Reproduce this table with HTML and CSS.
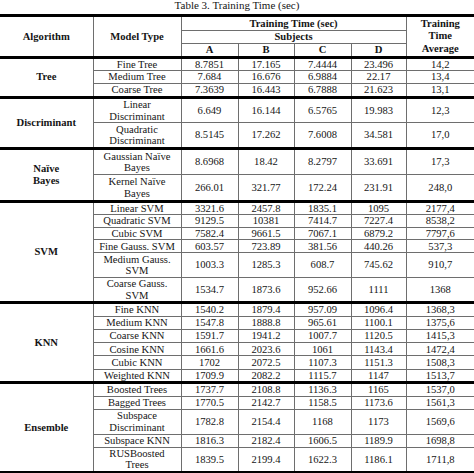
FILE: index.html
```html
<!DOCTYPE html>
<html lang="en">
<head>
<meta charset="utf-8">
<title>Table 3. Training Time (sec)</title>
<link rel="stylesheet" href="styles.css">
</head>
<body>
<div class="title">Table 3. Training Time (sec)</div>
<table class="data">
  <colgroup>
    <col class="c-alg"><col class="c-model"><col class="c-a"><col class="c-b"><col class="c-c"><col class="c-d"><col class="c-avg">
  </colgroup>
  <thead>
    <tr class="h1">
      <th rowspan="3">Algorithm</th>
      <th rowspan="3">Model Type</th>
      <th colspan="4">Training Time (sec)</th>
      <th rowspan="3" class="avg">Training<br>Time<br>Average</th>
    </tr>
    <tr class="h2"><th colspan="4">Subjects</th></tr>
    <tr class="h3"><th>A</th><th>B</th><th>C</th><th>D</th></tr>
  </thead>
  <tbody class="g-tree">
    <tr class="s"><th rowspan="3" class="alg">Tree</th><td>Fine Tree</td><td>8.7851</td><td>17.165</td><td>7.4444</td><td>23.496</td><td>14,2</td></tr>
    <tr class="s"><td>Medium Tree</td><td>7.684</td><td>16.676</td><td>6.9884</td><td>22.17</td><td>13,4</td></tr>
    <tr class="s"><td>Coarse Tree</td><td>7.3639</td><td>16.443</td><td>6.7888</td><td>21.623</td><td>13,1</td></tr>
  </tbody>
  <tbody class="g-disc">
    <tr class="d"><th rowspan="2" class="alg">Discriminant</th><td>Linear<br>Discriminant</td><td>6.649</td><td>16.144</td><td>6.5765</td><td>19.983</td><td>12,3</td></tr>
    <tr class="d"><td>Quadratic<br>Discriminant</td><td>8.5145</td><td>17.262</td><td>7.6008</td><td>34.581</td><td>17,0</td></tr>
  </tbody>
  <tbody class="g-nb">
    <tr class="d"><th rowspan="2" class="alg">Naïve<br>Bayes</th><td>Gaussian Naïve<br>Bayes</td><td>8.6968</td><td>18.42</td><td>8.2797</td><td>33.691</td><td>17,3</td></tr>
    <tr class="d"><td>Kernel Naïve<br>Bayes</td><td>266.01</td><td>321.77</td><td>172.24</td><td>231.91</td><td>248,0</td></tr>
  </tbody>
  <tbody class="g-svm">
    <tr class="s"><th rowspan="6" class="alg">SVM</th><td>Linear SVM</td><td>3321.6</td><td>2457.8</td><td>1835.1</td><td>1095</td><td>2177,4</td></tr>
    <tr class="s"><td>Quadratic SVM</td><td>9129.5</td><td>10381</td><td>7414.7</td><td>7227.4</td><td>8538,2</td></tr>
    <tr class="s"><td>Cubic SVM</td><td>7582.4</td><td>9661.5</td><td>7067.1</td><td>6879.2</td><td>7797,6</td></tr>
    <tr class="s"><td>Fine Gauss. SVM</td><td>603.57</td><td>723.89</td><td>381.56</td><td>440.26</td><td>537,3</td></tr>
    <tr class="d"><td>Medium Gauss.<br>SVM</td><td>1003.3</td><td>1285.3</td><td>608.7</td><td>745.62</td><td>910,7</td></tr>
    <tr class="d"><td>Coarse Gauss.<br>SVM</td><td>1534.7</td><td>1873.6</td><td>952.66</td><td>1111</td><td>1368</td></tr>
  </tbody>
  <tbody class="g-knn">
    <tr class="s"><th rowspan="6" class="alg">KNN</th><td>Fine KNN</td><td>1540.2</td><td>1879.4</td><td>957.09</td><td>1096.4</td><td>1368,3</td></tr>
    <tr class="s"><td>Medium KNN</td><td>1547.8</td><td>1888.8</td><td>965.61</td><td>1100.1</td><td>1375,6</td></tr>
    <tr class="s"><td>Coarse KNN</td><td>1591.7</td><td>1941.2</td><td>1007.7</td><td>1120.5</td><td>1415,3</td></tr>
    <tr class="s"><td>Cosine KNN</td><td>1661.6</td><td>2023.6</td><td>1061</td><td>1143.4</td><td>1472,4</td></tr>
    <tr class="s"><td>Cubic KNN</td><td>1702</td><td>2072.5</td><td>1107.3</td><td>1151.3</td><td>1508,3</td></tr>
    <tr class="s"><td>Weighted KNN</td><td>1709.9</td><td>2082.2</td><td>1115.7</td><td>1147</td><td>1513,7</td></tr>
  </tbody>
  <tbody class="g-ens">
    <tr class="s"><th rowspan="5" class="alg">Ensemble</th><td>Boosted Trees</td><td>1737.7</td><td>2108.8</td><td>1136.3</td><td>1165</td><td>1537,0</td></tr>
    <tr class="s"><td>Bagged Trees</td><td>1770.5</td><td>2142.7</td><td>1158.5</td><td>1173.6</td><td>1561,3</td></tr>
    <tr class="d"><td>Subspace<br>Discriminant</td><td>1782.8</td><td>2154.4</td><td>1168</td><td>1173</td><td>1569,6</td></tr>
    <tr class="s"><td>Subspace KNN</td><td>1816.3</td><td>2182.4</td><td>1606.5</td><td>1189.9</td><td>1698,8</td></tr>
    <tr class="d"><td>RUSBoosted<br>Trees</td><td>1839.5</td><td>2199.4</td><td>1622.3</td><td>1186.1</td><td>1711,8</td></tr>
  </tbody>
</table>
</body>
</html>
```

FILE: styles.css
```css
html, body {
  margin: 0;
  padding: 0;
  background: #ffffff;
}

body {
  font-family: "Liberation Serif", "Times New Roman", serif;
  color: #151515;
  font-size: 10.6px;
  line-height: 11.5px;
}

.title {
  height: 14px;
  font-size: 11px;
  line-height: 11px;
  text-align: center;
}

.data {
  width: 474px;
  table-layout: fixed;
  border-collapse: collapse;
  border-top: 3px solid #000;
  border-bottom: 3px solid #000;
  border-left: hidden;
  border-right: hidden;
}

.c-alg { width: 93px; }
.c-model { width: 88px; }
.c-a { width: 57px; }
.c-b { width: 56px; }
.c-c { width: 57px; }
.c-d { width: 55px; }
.c-avg { width: 68px; }

.data th,
.data td {
  padding: 0 1px;
  border: 1px solid #6e6e6e;
  text-align: center;
  vertical-align: middle;
  white-space: nowrap;
  font-weight: normal;
}

.data thead th,
.data th.alg {
  font-weight: bold;
}

.data th.avg {
  line-height: 12.5px;
}

.data thead {
  border-bottom: 3px solid #000;
}

.data tbody {
  border-top: 3px solid #000;
}

.h1 { height: 15px; }
.h2 { height: 12px; }
.h3 { height: 14px; }

.g-tree .s { height: 13.3px; }
.g-disc .d { height: 25.5px; }
.g-nb .d { height: 26.5px; }
.g-svm .s { height: 12.6px; }
.g-svm .d { height: 25px; }
.g-knn .s { height: 13.3px; }
.g-ens .s { height: 13px; }
.g-ens .d { height: 25px; }
```
